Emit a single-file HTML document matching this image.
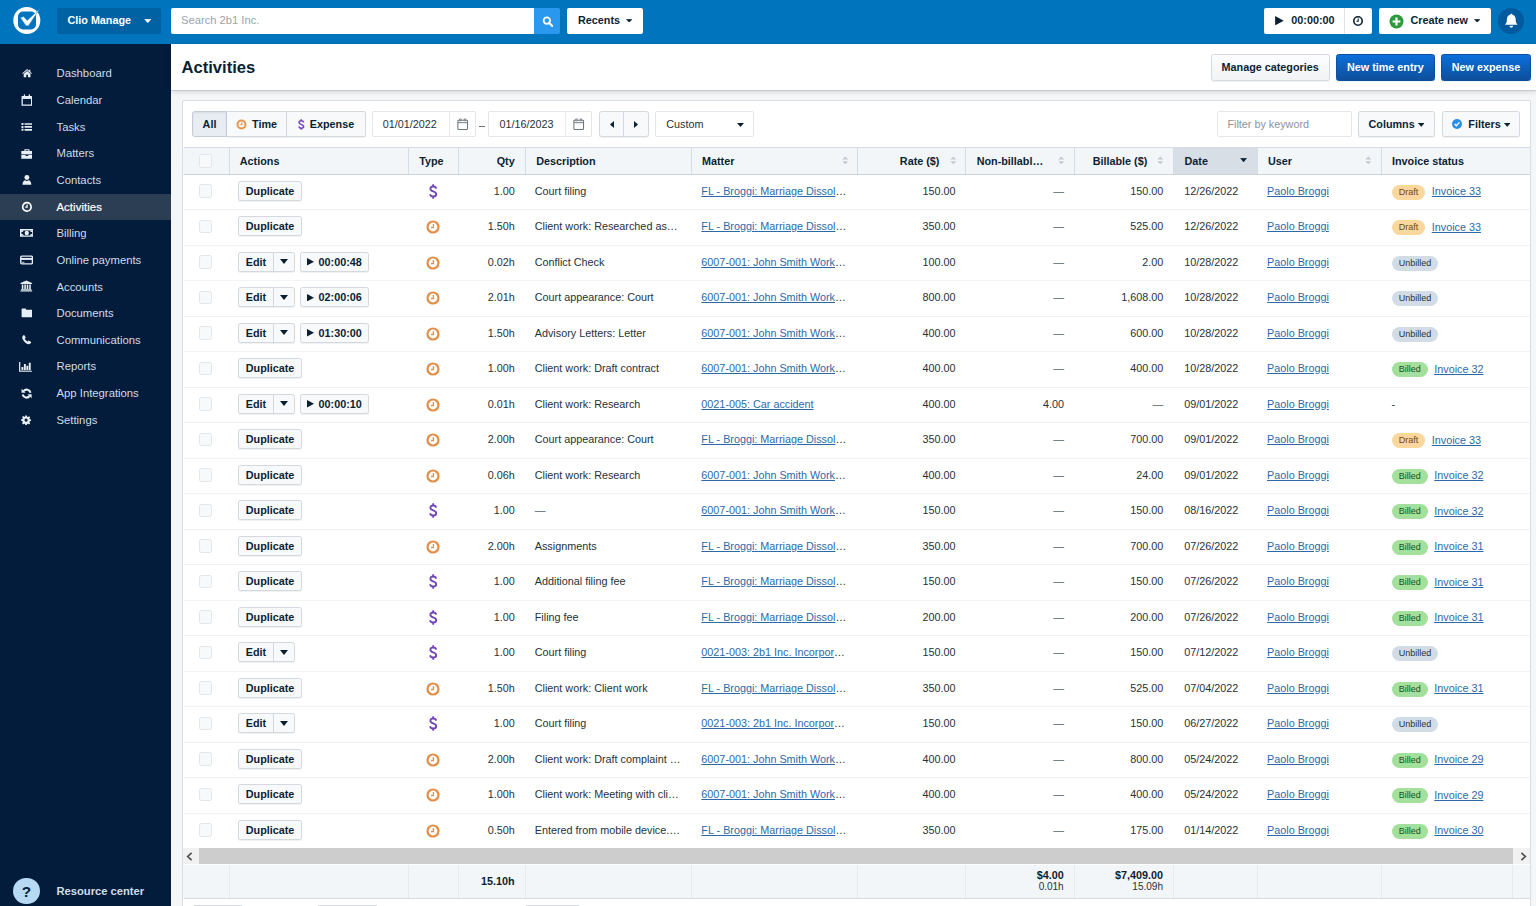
<!DOCTYPE html>
<html><head><meta charset="utf-8"><title>Activities</title>
<style>
*{box-sizing:border-box;margin:0;padding:0}
html,body{width:1536px;height:906px;overflow:hidden}
body{font-family:"Liberation Sans",sans-serif;font-size:10.8px;color:#263238;background:#f5f6f8;position:relative}
a{color:#2b69a8;text-decoration:underline;cursor:pointer}
/* header */
#hdr{position:absolute;left:0;top:0;width:1536px;height:44px;background:#0075bd}
#logo{position:absolute;left:0;top:0}
#appsw{position:absolute;left:56.7px;top:7.5px;width:104px;height:26px;background:#0061a3;border-radius:2px;color:#fff;font-weight:bold;font-size:10.8px;line-height:24.6px;padding-left:10.8px}
#appsw svg{position:absolute;right:9.500px;top:11px}
#search{position:absolute;left:171px;top:7.5px;width:363px;height:26px;background:#fff;border-radius:2px 0 0 2px;color:#9aa3ab;font-size:11.2px;line-height:24.6px;padding-left:10px}
#sbtn{position:absolute;left:534px;top:7.5px;width:26px;height:26px;background:#2b98f0;border-radius:0 2px 2px 0}
#sbtn svg{position:absolute;left:7.500px;top:8px}
.hbtn{position:absolute;top:7.5px;height:26px;background:#fff;border-radius:2px;color:#0b1f33;font-weight:bold;font-size:10.8px;line-height:25px}
#recents{left:567px;width:76px;padding-left:11px}
#recents svg{position:absolute;right:10.800px;top:11.300px}
#timer{left:1264px;width:108px}
#timer .play{position:absolute;left:11.200px;top:8.300px}
#timer .t{position:absolute;left:27.300px;top:0}
#timer .div{position:absolute;left:80px;top:0;width:1px;height:26px;background:#dfe4e8}
#timer .clk{position:absolute;left:88px;top:7px}
#create{left:1379px;width:112px}
#create .plus{position:absolute;left:10px;top:6px}
#create .t{position:absolute;left:31.400px;top:0}
#create .caret{position:absolute;right:10.800px;top:11.300px}
#bell{position:absolute;left:1498px;top:7.600px;width:26px;height:26px;border-radius:50%;background:#005a9e}
#bell svg{position:absolute;left:5.700px;top:5px}
/* sidebar */
#side{position:absolute;left:0;top:44px;width:171px;height:862px;background:#031c3b}
.nav{position:absolute;left:0;width:171px;height:26.6px;color:#d0dbe9;font-size:11.3px;line-height:26.6px;padding-left:56.5px}
.nav.on{background:#2c3e54;color:#fff;letter-spacing:0.08px;-webkit-text-stroke:0.2px #fff}
.nav svg{position:absolute;left:20.600px;top:7.400px}
#rc{position:absolute;left:13.3px;top:834px;width:26.4px;height:26.4px;border-radius:50%;background:#b6d9f4;color:#031c3b;font-weight:bold;font-size:15.4px;line-height:27px;text-align:center}
#rct{position:absolute;left:56.5px;top:834px;line-height:26.6px;color:#d3dce8;font-weight:bold;font-size:11.2px}
/* title bar */
#tbar{position:absolute;left:171px;top:44px;width:1365px;height:46.5px;background:#fff;border-bottom:1px solid #c9cccf;box-shadow:0 1px 5px rgba(0,0,0,.13)}
#tbar h1{position:absolute;left:10.5px;top:0;line-height:47.8px;font-size:16.6px;font-weight:bold;color:#0b1f33}
.btn{display:inline-block;border:1px solid #d3d9df;border-radius:2.5px;background:#f7f9fa;color:#0b1f33;font-weight:bold;font-size:10.8px;white-space:nowrap;position:relative;box-shadow:0 1px 1px rgba(0,0,0,.06)}
.tb{position:absolute;top:10px;height:26.6px;line-height:24.8px;text-align:center}
.pri{background:linear-gradient(#0a6fdc,#0e4f9c);border-color:#0b4f9e;color:#fff}
/* panel */
#panel{position:absolute;left:182px;top:100px;width:1349px;height:850px;background:#fff;border:1px solid #d9dee3;border-radius:2px}
.tl{position:absolute;top:9.8px;height:26px;line-height:24px}
.seg{border-radius:0;text-align:center}
.inp{position:absolute;top:9.8px;height:26px;border:1px solid #e3e7eb;border-radius:2px;background:#fff;line-height:24px;color:#263238;font-size:10.8px}
/* table */
#thead{box-shadow:-1px 0 0 #f3f6f9;position:absolute;left:0;top:45.5px;width:1346.5px;height:27.5px;background:#f3f6f9;border-top:1px solid #d5dce3;border-bottom:1px solid #cdd5dc;display:flex}
.th{height:25.5px;line-height:26.1px;font-weight:bold;font-size:10.8px;color:#0b1f33;border-right:1px solid #d5dce3;padding-left:10px;position:relative;white-space:nowrap}
.th.r{text-align:right;padding-right:25.7px;padding-left:0}
.th.c7{padding-right:30.4px}
.th .srt{position:absolute;right:9px;top:8.400px}
.th.r.nos{padding-right:10.5px}
.th.sorted{background:#d8dee5;padding-left:10.6px}
.th.last{border-right:0}
#tbody{position:absolute;left:0;top:73px;width:1346.5px}
.tr{display:flex;height:35.5px;border-bottom:1px solid #f1f3f5}
.td{height:34.5px;line-height:32.5px;white-space:nowrap;overflow:hidden;padding-left:8.6px;position:relative}
.td.r{text-align:right;padding-right:11.3px;padding-left:0}
.c0{width:46.3px}.c1{width:179.4px}.td.c1{padding-left:8.6px}.c2{width:49.6px}.c3{width:67.4px}.c4{width:165.8px}.c5{width:166.2px}.td.c5{padding-left:9.4px}.c6{width:108px}.c7{width:108.5px}.c8{width:99.3px}.td.c6,.td.c7,.td.c8{padding-right:10.6px}.tf.c7,.tf.c8{padding-right:10px}.c9{width:84px}.td.c9{padding-left:10.3px}.c10{width:124px}.td.c10{padding-left:9.1px}.c11{width:148px}.td.c11{padding-left:9.6px}
.cb{position:absolute;left:15.2px;top:9.5px;width:13.6px;height:13.6px;border:1px solid #e2e6ea;border-radius:2.5px;background:#f8f9fa}
.btn.sm{height:20px;line-height:18.2px;padding:0 6.4px;vertical-align:middle;margin-top:-0.9px;top:-0.5px}
.grp-l{border-radius:2.5px 0 0 2.5px}
.grp-r{border-radius:0 2.5px 2.5px 0;margin-left:-1px;padding:0 6px !important}
.tmr{margin-left:5px}
.tmr .play{margin-right:4.6px}
.caret{vertical-align:middle;position:relative;top:-1px}
.ic-clock{position:absolute;left:17.1px;top:10px}
.ic-dollar{position:absolute;left:20.1px;top:9.4px}
.badge{display:inline-block;height:15px;line-height:15px;border-radius:8px;padding:0 7.1px;font-size:9px;vertical-align:middle;margin-top:1.2px;color:#263238}
.badge.draft{background:#fad79c;color:#6b4a0e}
.badge.unbilled{background:#d2dce6}
.badge.billed{background:#a3e09b;color:#1a4f1a}
.inv{margin-left:6.5px;position:relative;top:0.5px}
.mut{color:#59646c}
#hscroll{box-shadow:-1px 0 0 #f1f1f1;position:absolute;left:0;top:746.8px;width:1346.5px;height:16.2px;background:#f1f1f1}
#hscroll .thumb{position:absolute;left:15.5px;top:0;width:1314px;height:16.2px;background:#cdcdcd}
#tfoot{box-shadow:-1px 0 0 #f3f6f9;position:absolute;left:0;top:763px;width:1346.5px;height:34.2px;background:#f3f6f9;border-bottom:1px solid #d5dce3;display:flex}
.tf{height:33px;border-right:1px solid #e6eaee;position:relative;font-size:10px;line-height:12px;text-align:right;padding-right:10.5px}
.tf b{display:block;color:#0b1f33;line-height:12.8px;font-size:10.8px}
</style></head>
<body>
<div id="hdr">
  <svg id="logo" width="44" height="44" viewBox="0 0 44 44"><circle cx="26.8" cy="20.4" r="13.5" fill="#fff"/><rect x="18" y="11.500" width="18" height="18" rx="5" fill="#0075bd"/><path d="M20.400 17.800L23.600 16.500 27.100 20.600 39.700 8.900 28.400 25.800H26z" fill="#fff" stroke="#0075bd" stroke-width="0.400"/></svg>
  <div id="appsw">Clio Manage<svg width="7.600" height="4" viewBox="0 0 8 4.500"><path d="M0.500 0.300h7L4 4.200z" fill="#fff" stroke="#fff" stroke-width="0.600" stroke-linejoin="round"/></svg></div>
  <div id="search">Search 2b1 Inc.</div>
  <div id="sbtn"><svg width="11.500" height="11" viewBox="0 0 12 12"><circle cx="5" cy="5" r="3.500" fill="none" stroke="#fff" stroke-width="2"/><path d="M7.600 7.600L11 11" stroke="#fff" stroke-width="2.200" stroke-linecap="round"/></svg></div>
  <div class="hbtn" id="recents">Recents<svg width="6.400" height="3.600" viewBox="0 0 8 4.500"><path d="M0.500 0.300h7L4 4.200z" fill="#0b1f33" stroke="#0b1f33" stroke-width="0.600" stroke-linejoin="round"/></svg></div>
  <div class="hbtn" id="timer"><svg class="play" width="8.800" height="9.400" viewBox="0 0 10 11"><path d="M0 0l10 5.5L0 11z" fill="#0b1f33"/></svg><span class="t">00:00:00</span><span class="div"></span><svg class="clk" width="12" height="12" viewBox="0 0 12 12"><circle cx="6" cy="6" r="4.200" fill="none" stroke="#0b1f33" stroke-width="1.600"/><path d="M6.200 3.600V6.300H4.400" fill="none" stroke="#0b1f33" stroke-width="1.100"/></svg></div>
  <div class="hbtn" id="create"><svg class="plus" width="15" height="15" viewBox="0 0 15 15"><circle cx="7.5" cy="7.5" r="7" fill="#2d9b3b"/><path d="M7.5 3.6v7.8M3.6 7.5h7.8" stroke="#fff" stroke-width="2.2"/></svg><span class="t">Create new</span><svg class="caret" width="6.400" height="3.600" viewBox="0 0 8 4.500"><path d="M0.500 0.300h7L4 4.200z" fill="#0b1f33" stroke="#0b1f33" stroke-width="0.600" stroke-linejoin="round"/></svg></div>
  <div id="bell"><svg width="14.600" height="15.600" viewBox="0 0 14 15"><path d="M7 0.8c.7 0 1.1.4 1.1 1 2 .5 3.100 2.200 3.100 4.300 0 2.800.6 4.100 1.900 5.200H.9C2.200 10.200 2.800 8.900 2.800 6.100c0-2.100 1.100-3.800 3.100-4.300 0-.6.400-1 1.100-1z" fill="#fff"/><path d="M5.300 12.300h3.400c0 1-.7 1.800-1.700 1.800s-1.700-.8-1.700-1.800z" fill="#fff"/></svg></div>
</div>
<div id="side">
<div class="nav" style="top:16.30px"><svg width="10.2" height="10.2" viewBox="0 0 12 12" preserveAspectRatio="none" style="left:21.6px;top:7.6px"><path d="M6 1.2L0.3 6.3l.7.8L6 2.700l5 4.400.7-.8L9.800 4.600V2H8.400v1.300z" fill="#e8eef5"/><path d="M6 3.600L2 7.100V11h3V8h2v3h3V7.100z" fill="#e8eef5"/></svg>Dashboard</div>
<div class="nav" style="top:42.95px"><svg width="11.8" height="12.4" viewBox="0 0 12 12" preserveAspectRatio="none" style="left:20.6px;top:7.0px"><path d="M1.200 2.600h9.600v8.200H1.200z" fill="none" stroke="#e8eef5" stroke-width="1.300"/><path d="M1.200 2.600h9.600v2.200H1.200z" fill="#e8eef5"/><path d="M3.500 0.800v2.400M8.500 0.800v2.400" stroke="#e8eef5" stroke-width="1.300" stroke-linecap="round"/></svg>Calendar</div>
<div class="nav" style="top:69.60px"><svg width="11.8" height="11.8" viewBox="0 0 12 12" preserveAspectRatio="none" style="left:20.6px;top:7.4px"><path d="M0.500 2h2v2h-2zM0.500 5h2v2h-2zM0.500 8h2v2h-2z" fill="#e8eef5"/><path d="M3.600 2.200h8v1.600h-8zM3.600 5.200h8v1.600h-8zM3.600 8.200h8v1.600h-8z" fill="#e8eef5"/></svg>Tasks</div>
<div class="nav" style="top:96.25px"><svg width="11.8" height="11.8" viewBox="0 0 12 12" preserveAspectRatio="none" style="left:20.6px;top:7.4px"><path d="M0.300 3h11.400v3.500H0.300z" fill="#e8eef5"/><path d="M0.300 7.200h4.400v1h2.600v-1h4.400v3.800H0.300z" fill="#e8eef5"/><path d="M4 3V1.700h4V3" fill="none" stroke="#e8eef5" stroke-width="1.100"/></svg>Matters</div>
<div class="nav" style="top:122.90px"><svg width="11.8" height="11.8" viewBox="0 0 12 12" preserveAspectRatio="none" style="left:20.6px;top:7.4px"><circle cx="6" cy="3.500" r="2.500" fill="#e8eef5"/><path d="M1.500 11c0-3 1.500-4.600 2.700-4.600.5.400 1 .7 1.800.7s1.300-.3 1.800-.7c1.200 0 2.700 1.600 2.700 4.600z" fill="#e8eef5"/></svg>Contacts</div>
<div class="nav on" style="top:149.55px"><svg width="11.8" height="11.8" viewBox="0 0 12 12" preserveAspectRatio="none" style="left:20.6px;top:7.4px"><circle cx="6" cy="6" r="4.300" fill="none" stroke="#ffffff" stroke-width="1.700"/><path d="M6.200 3.600V6.300H4.300" fill="none" stroke="#ffffff" stroke-width="1.200"/></svg>Activities</div>
<div class="nav" style="top:176.20px"><svg width="13.6" height="11.8" viewBox="0 0 12 12" preserveAspectRatio="none" style="left:19.8px;top:7.2px"><path d="M0.600 2.800h10.800v6.400H0.600z" fill="none" stroke="#e8eef5" stroke-width="1.300"/><ellipse cx="6" cy="6" rx="1.900" ry="2.300" fill="#e8eef5"/><path d="M1 3.200h2.200c0 1.200-1 2-2.200 2zM11 3.200H8.800c0 1.200 1 2 2.200 2zM1 8.800h2.200c0-1.200-1-2-2.200-2zM11 8.800H8.800c0-1.200 1-2 2.200-2z" fill="#e8eef5"/></svg>Billing</div>
<div class="nav" style="top:202.85px"><svg width="13.2" height="11.8" viewBox="0 0 12 12" preserveAspectRatio="none" style="left:20.0px;top:7.3px"><rect x="0.700" y="2.200" width="10.600" height="7.800" rx="1" fill="none" stroke="#e8eef5" stroke-width="1.300"/><path d="M0.700 4h10.600v2H0.700z" fill="#e8eef5"/><path d="M2 8h2v.9H2z" fill="#e8eef5"/></svg>Online payments</div>
<div class="nav" style="top:229.50px"><svg width="12.6" height="12.2" viewBox="0 0 12 12" preserveAspectRatio="none" style="left:20.0px;top:6.9px"><path d="M6 0.600L0.500 3v1h11V3z" fill="#e8eef5"/><path d="M1.700 4.500h1.500v4.300H1.700zM4.100 4.500h1.500v4.300H4.100zM6.400 4.500h1.500v4.300H6.400zM8.800 4.500h1.500v4.300H8.800z" fill="#e8eef5"/><path d="M1 9.200h10v.9H1zM0.400 10.400h11.200v1H0.400z" fill="#e8eef5"/></svg>Accounts</div>
<div class="nav" style="top:256.15px"><svg width="11.8" height="11.8" viewBox="0 0 12 12" preserveAspectRatio="none" style="left:20.6px;top:6.7px"><path d="M0.600 2.300c0-.5.400-.8.800-.8h3c.5 0 .8.300.8.800v.5h5.400c.5 0 .8.300.8.800v6c0 .5-.300.800-.8.800H1.400c-.4 0-.8-.3-.8-.8z" fill="#e8eef5"/></svg>Documents</div>
<div class="nav" style="top:282.80px"><svg width="11.8" height="11.8" viewBox="0 0 12 12" preserveAspectRatio="none" style="left:20.6px;top:7.4px"><path d="M2.500 1.300c.3-.3.700-.3.900 0l1.300 1.900c.2.300.1.600-.1.800l-.8.700c.5 1.200 1.700 2.400 3 3l.7-.8c.2-.2.500-.3.800-.1l1.900 1.300c.3.200.3.600 0 .9l-.9 1c-.5.500-1.200.6-1.900.4C4.700 9.500 2.300 7 1.300 4.200c-.2-.7-.1-1.400.4-1.900z" fill="#e8eef5"/></svg>Communications</div>
<div class="nav" style="top:309.45px"><svg width="13.4" height="11.2" viewBox="0 0 12 12" preserveAspectRatio="none" style="left:19.4px;top:7.4px"><path d="M0.600 1v10h11" fill="none" stroke="#e8eef5" stroke-width="1.100"/><path d="M2.200 6.500h1.700v3.400H2.200zM4.400 3.200h1.700v6.700H4.400zM6.600 5h1.700v4.900H6.600zM8.800 2h1.700v7.900H8.800z" fill="#e8eef5"/></svg>Reports</div>
<div class="nav" style="top:336.10px"><svg width="11.2" height="11.2" viewBox="0 0 12 12" preserveAspectRatio="none" style="left:21.0px;top:7.7px"><path d="M10.200 5A4.200 4.200 0 0 0 2.800 3.400" fill="none" stroke="#e8eef5" stroke-width="2.300"/><path d="M0.600 0.900v4.300h4.300z" fill="#e8eef5"/><path d="M1.800 7a4.200 4.200 0 0 0 7.400 1.600" fill="none" stroke="#e8eef5" stroke-width="2.300"/><path d="M11.400 11.100V6.800H7.100z" fill="#e8eef5"/></svg>App Integrations</div>
<div class="nav" style="top:362.75px"><svg width="10.2" height="10.2" viewBox="0 0 12 12" preserveAspectRatio="none" style="left:21.4px;top:8.2px"><path d="M5.100 0.500h1.800l.3 1.500 1 .4 1.300-.9 1.300 1.300-.9 1.300.4 1 1.500.3v1.800l-1.500.3-.4 1 .9 1.300-1.300 1.300-1.300-.9-1 .4-.3 1.500H5.100l-.3-1.500-1-.4-1.300.9-1.300-1.300.9-1.300-.4-1L.200 6.900V5.100l1.500-.3.4-1-.9-1.300 1.300-1.300 1.300.9 1-.4z" fill="#e8eef5"/><circle cx="6" cy="6" r="1.900" fill="#031c3b"/></svg>Settings</div>
  <div id="rc">?</div><div id="rct">Resource center</div>
</div>
<div id="tbar">
  <h1>Activities</h1>
  <span class="btn tb" style="left:1039.6px;width:119.100px;background:linear-gradient(#fdfdfe,#f1f3f5)">Manage categories</span>
  <span class="btn tb pri" style="left:1165.2px;width:98.400px">New time entry</span>
  <span class="btn tb pri" style="left:1270px;width:89.900px">New expense</span>
</div>
<div id="panel"><div id="pin" style="position:absolute;left:0.5px;top:0.5px;width:1346.5px;height:840px">
  <span class="btn tl seg" style="left:8.5px;width:35.0px;background:#e8edf3;border-color:#c3ccd6;border-radius:2.500px 0 0 2.500px;box-shadow:inset 0 1px 2px rgba(0,0,0,.08)">All</span>
<span class="btn tl seg" style="left:43.5px;width:60.0px;border-left:0"><svg width="11" height="11" viewBox="0 0 14 14" style="vertical-align:middle;position:relative;top:-1px;margin-right:5px"><circle cx="7" cy="7" r="5.100" fill="none" stroke="#e8944a" stroke-width="2.500"/><path d="M7.400 4.600V7.400H5.400" fill="none" stroke="#e8944a" stroke-width="1.400"/></svg>Time</span>
<span class="btn tl seg" style="left:103.5px;width:78.5px;border-left:0;border-radius:0 2.500px 2.500px 0"><svg width="6.600" height="11" viewBox="0 0 9 15" style="vertical-align:middle;position:relative;top:-0.500px;margin-right:4.800px;margin-left:1px"><path d="M4.500 0.200V2.600M4.500 12.400V14.800" stroke="#7748be" stroke-width="2.100" fill="none"/><path d="M7.700 4.600C7.400 3.100 6.200 2.400 4.500 2.400 2.700 2.400 1.500 3.300 1.500 4.700 1.500 6.200 2.700 6.800 4.500 7.400 6.500 8 7.700 8.700 7.700 10.300 7.700 11.700 6.400 12.600 4.500 12.600 2.700 12.600 1.500 11.800 1.100 10.300" stroke="#7748be" stroke-width="2.200" fill="none"/></svg>Expense</span>
<div class="inp" style="left:188.8px;width:104px;padding-left:9.5px">01/01/2022<span style="position:absolute;left:76px;top:0;width:1px;height:24px;background:#e6eaee"></span><span style="position:absolute;left:84px;top:1.900px"><svg width="11.400" height="12.400" viewBox="0 0 12 13"><rect x="0.900" y="2.300" width="10.200" height="9.800" rx="0.800" fill="none" stroke="#6f777e" stroke-width="1.100"/><path d="M0.900 4.900h10.200" stroke="#6f777e" stroke-width="1"/><path d="M2.800 1h1.700v2h-1.700zM7.500 1h1.700v2h-1.700z" fill="#fff" stroke="#6f777e" stroke-width="0.900"/></svg></span></div>
<div class="inp" style="left:304.9px;width:104px;padding-left:10.0px">01/16/2023<span style="position:absolute;left:76px;top:0;width:1px;height:24px;background:#e6eaee"></span><span style="position:absolute;left:84px;top:1.900px"><svg width="11.400" height="12.400" viewBox="0 0 12 13"><rect x="0.900" y="2.300" width="10.200" height="9.800" rx="0.800" fill="none" stroke="#6f777e" stroke-width="1.100"/><path d="M0.900 4.900h10.200" stroke="#6f777e" stroke-width="1"/><path d="M2.800 1h1.700v2h-1.700zM7.500 1h1.700v2h-1.700z" fill="#fff" stroke="#6f777e" stroke-width="0.900"/></svg></span></div>
<span style="position:absolute;left:295.7px;top:24.400px;width:6.300px;height:1.200px;background:#6a7076"></span>
<span class="btn tl" style="left:415.8px;width:24.500px;border-radius:2.500px 0 0 2.500px"><svg width="4" height="7" viewBox="0 0 4 7" style="position:absolute;left:9.500px;top:8.500px"><path d="M4 0v7L0 3.500z" fill="#0b1f33"/></svg></span>
<span class="btn tl" style="left:439.3px;width:25.800px;border-radius:0 2.500px 2.500px 0"><svg width="4" height="7" viewBox="0 0 4 7" style="position:absolute;left:10px;top:8.500px"><path d="M0 0v7l4-3.500z" fill="#0b1f33"/></svg></span>
<div class="inp" style="left:471.8px;width:99px;padding-left:10px">Custom<svg width="7" height="4" viewBox="0 0 7 4" style="position:absolute;right:9px;top:10.500px"><path d="M0 0h7L3.500 4z" fill="#0b1f33"/></svg></div>
<div class="inp" style="left:1033.5px;width:134.500px;padding-left:9.400px;color:#8a949e">Filter by keyword</div>
<span class="btn tl" style="left:1174.5px;width:76.700px;text-align:center;font-size:10.800px">Columns <svg width="6.500" height="3.800" viewBox="0 0 7 4" style="vertical-align:middle;position:relative;top:-0.500px"><path d="M0.300 0h6.400L3.500 3.800z" fill="#0b1f33" stroke="#0b1f33" stroke-width="0.600" stroke-linejoin="round"/></svg></span>
<span class="btn tl" style="left:1258.9px;width:77.700px;text-align:center;font-size:10.800px"><svg width="10" height="10" viewBox="0 0 10 10" style="vertical-align:middle;position:relative;top:-1px;margin-right:6px"><circle cx="5" cy="5" r="5" fill="#2b8de8"/><path d="M2.600 5.100l1.700 1.700 3.100-3.400" fill="none" stroke="#fff" stroke-width="1.400"/></svg>Filters <svg width="6.500" height="3.800" viewBox="0 0 7 4" style="vertical-align:middle;position:relative;top:-0.500px"><path d="M0.300 0h6.400L3.500 3.800z" fill="#0b1f33" stroke="#0b1f33" stroke-width="0.600" stroke-linejoin="round"/></svg></span>
  <div id="thead"><div class="th c0 "><span class="cb" style="top:6.300px"></span></div><div class="th c1 ">Actions</div><div class="th c2 ">Type</div><div class="th c3 r nos">Qty</div><div class="th c4 ">Description</div><div class="th c5 ">Matter<svg class="srt" width="6.600" height="8.800" viewBox="0 0 7 10" preserveAspectRatio="none"><path d="M0.300 4L3.500 0.500 6.700 4zM0.300 6L3.500 9.500 6.700 6z" fill="#c3c9cf"/></svg></div><div class="th c6 r">Rate ($)<svg class="srt" width="6.600" height="8.800" viewBox="0 0 7 10" preserveAspectRatio="none"><path d="M0.300 4L3.500 0.500 6.700 4zM0.300 6L3.500 9.500 6.700 6z" fill="#c3c9cf"/></svg></div><div class="th c7 r">Non-billabl…<svg class="srt" width="6.600" height="8.800" viewBox="0 0 7 10" preserveAspectRatio="none"><path d="M0.300 4L3.500 0.500 6.700 4zM0.300 6L3.500 9.500 6.700 6z" fill="#c3c9cf"/></svg></div><div class="th c8 r">Billable ($)<svg class="srt" width="6.600" height="8.800" viewBox="0 0 7 10" preserveAspectRatio="none"><path d="M0.300 4L3.500 0.500 6.700 4zM0.300 6L3.500 9.500 6.700 6z" fill="#c3c9cf"/></svg></div><div class="th c9 sorted">Date<svg width="7.200" height="4.200" viewBox="0 0 8 5" style="position:absolute;right:10.200px;top:10.200px"><path d="M0.400 0.300h7.200L4 4.700z" fill="#0b1f33" stroke="#0b1f33" stroke-width="0.600" stroke-linejoin="round"/></svg></div><div class="th c10 ">User<svg class="srt" width="6.600" height="8.800" viewBox="0 0 7 10" preserveAspectRatio="none"><path d="M0.300 4L3.500 0.500 6.700 4zM0.300 6L3.500 9.500 6.700 6z" fill="#c3c9cf"/></svg></div><div class="th c11 last">Invoice status</div></div>
  <div id="tbody">
<div class="tr"><div class="td c0"><span class="cb"></span></div><div class="td c1"><span class="btn sm">Duplicate</span></div><div class="td c2"><svg class="ic-dollar" width="8.400" height="15" viewBox="0 0 9 15" preserveAspectRatio="none"><path d="M4.500 0.200V2.600M4.500 12.400V14.800" stroke="#7044b6" stroke-width="1.900" fill="none"/><path d="M7.700 4.600C7.400 3.100 6.200 2.400 4.500 2.400 2.700 2.400 1.500 3.300 1.500 4.700 1.500 6.200 2.700 6.800 4.500 7.400 6.500 8 7.700 8.700 7.700 10.300 7.700 11.700 6.400 12.600 4.500 12.600 2.700 12.600 1.500 11.800 1.100 10.300" stroke="#7044b6" stroke-width="2" fill="none"/></svg></div><div class="td c3 r">1.00</div><div class="td c4">Court filing</div><div class="td c5"><a class="lnk">FL - Broggi: Marriage Dissol</a>…</div><div class="td c6 r">150.00</div><div class="td c7 r"><span class="mut">—</span></div><div class="td c8 r">150.00</div><div class="td c9">12/26/2022</div><div class="td c10"><a class="lnk">Paolo Broggi</a></div><div class="td c11"><span class="badge draft">Draft</span><a class="lnk inv">Invoice 33</a></div></div>
<div class="tr"><div class="td c0"><span class="cb"></span></div><div class="td c1"><span class="btn sm">Duplicate</span></div><div class="td c2"><svg class="ic-clock" width="14" height="14" viewBox="0 0 14 14"><circle cx="7" cy="7" r="5.5" fill="none" stroke="#e18f48" stroke-width="2.2"/><path d="M7.4 4.1V7.5H5" fill="none" stroke="#e2924d" stroke-width="1.3"/></svg></div><div class="td c3 r">1.50h</div><div class="td c4">Client work: Researched as…</div><div class="td c5"><a class="lnk">FL - Broggi: Marriage Dissol</a>…</div><div class="td c6 r">350.00</div><div class="td c7 r"><span class="mut">—</span></div><div class="td c8 r">525.00</div><div class="td c9">12/26/2022</div><div class="td c10"><a class="lnk">Paolo Broggi</a></div><div class="td c11"><span class="badge draft">Draft</span><a class="lnk inv">Invoice 33</a></div></div>
<div class="tr"><div class="td c0"><span class="cb"></span></div><div class="td c1"><span class="btn sm grp-l">Edit</span><span class="btn sm grp-r"><svg class="caret" width="8" height="5" viewBox="0 0 8 5"><path d="M0 0h8L4 5z" fill="#0b1f33"/></svg></span><span class="btn sm tmr"><svg class="play" width="7" height="7.400" viewBox="0 0 8 9" preserveAspectRatio="none"><path d="M0 0l8 4.5L0 9z" fill="#0b1f33"/></svg>00:00:48</span></div><div class="td c2"><svg class="ic-clock" width="14" height="14" viewBox="0 0 14 14"><circle cx="7" cy="7" r="5.5" fill="none" stroke="#e18f48" stroke-width="2.2"/><path d="M7.4 4.1V7.5H5" fill="none" stroke="#e2924d" stroke-width="1.3"/></svg></div><div class="td c3 r">0.02h</div><div class="td c4">Conflict Check</div><div class="td c5"><a class="lnk">6007-001: John Smith Work</a>…</div><div class="td c6 r">100.00</div><div class="td c7 r"><span class="mut">—</span></div><div class="td c8 r">2.00</div><div class="td c9">10/28/2022</div><div class="td c10"><a class="lnk">Paolo Broggi</a></div><div class="td c11"><span class="badge unbilled">Unbilled</span></div></div>
<div class="tr"><div class="td c0"><span class="cb"></span></div><div class="td c1"><span class="btn sm grp-l">Edit</span><span class="btn sm grp-r"><svg class="caret" width="8" height="5" viewBox="0 0 8 5"><path d="M0 0h8L4 5z" fill="#0b1f33"/></svg></span><span class="btn sm tmr"><svg class="play" width="7" height="7.400" viewBox="0 0 8 9" preserveAspectRatio="none"><path d="M0 0l8 4.5L0 9z" fill="#0b1f33"/></svg>02:00:06</span></div><div class="td c2"><svg class="ic-clock" width="14" height="14" viewBox="0 0 14 14"><circle cx="7" cy="7" r="5.5" fill="none" stroke="#e18f48" stroke-width="2.2"/><path d="M7.4 4.1V7.5H5" fill="none" stroke="#e2924d" stroke-width="1.3"/></svg></div><div class="td c3 r">2.01h</div><div class="td c4">Court appearance: Court</div><div class="td c5"><a class="lnk">6007-001: John Smith Work</a>…</div><div class="td c6 r">800.00</div><div class="td c7 r"><span class="mut">—</span></div><div class="td c8 r">1,608.00</div><div class="td c9">10/28/2022</div><div class="td c10"><a class="lnk">Paolo Broggi</a></div><div class="td c11"><span class="badge unbilled">Unbilled</span></div></div>
<div class="tr"><div class="td c0"><span class="cb"></span></div><div class="td c1"><span class="btn sm grp-l">Edit</span><span class="btn sm grp-r"><svg class="caret" width="8" height="5" viewBox="0 0 8 5"><path d="M0 0h8L4 5z" fill="#0b1f33"/></svg></span><span class="btn sm tmr"><svg class="play" width="7" height="7.400" viewBox="0 0 8 9" preserveAspectRatio="none"><path d="M0 0l8 4.5L0 9z" fill="#0b1f33"/></svg>01:30:00</span></div><div class="td c2"><svg class="ic-clock" width="14" height="14" viewBox="0 0 14 14"><circle cx="7" cy="7" r="5.5" fill="none" stroke="#e18f48" stroke-width="2.2"/><path d="M7.4 4.1V7.5H5" fill="none" stroke="#e2924d" stroke-width="1.3"/></svg></div><div class="td c3 r">1.50h</div><div class="td c4">Advisory Letters: Letter</div><div class="td c5"><a class="lnk">6007-001: John Smith Work</a>…</div><div class="td c6 r">400.00</div><div class="td c7 r"><span class="mut">—</span></div><div class="td c8 r">600.00</div><div class="td c9">10/28/2022</div><div class="td c10"><a class="lnk">Paolo Broggi</a></div><div class="td c11"><span class="badge unbilled">Unbilled</span></div></div>
<div class="tr"><div class="td c0"><span class="cb"></span></div><div class="td c1"><span class="btn sm">Duplicate</span></div><div class="td c2"><svg class="ic-clock" width="14" height="14" viewBox="0 0 14 14"><circle cx="7" cy="7" r="5.5" fill="none" stroke="#e18f48" stroke-width="2.2"/><path d="M7.4 4.1V7.5H5" fill="none" stroke="#e2924d" stroke-width="1.3"/></svg></div><div class="td c3 r">1.00h</div><div class="td c4">Client work: Draft contract</div><div class="td c5"><a class="lnk">6007-001: John Smith Work</a>…</div><div class="td c6 r">400.00</div><div class="td c7 r"><span class="mut">—</span></div><div class="td c8 r">400.00</div><div class="td c9">10/28/2022</div><div class="td c10"><a class="lnk">Paolo Broggi</a></div><div class="td c11"><span class="badge billed">Billed</span><a class="lnk inv">Invoice 32</a></div></div>
<div class="tr"><div class="td c0"><span class="cb"></span></div><div class="td c1"><span class="btn sm grp-l">Edit</span><span class="btn sm grp-r"><svg class="caret" width="8" height="5" viewBox="0 0 8 5"><path d="M0 0h8L4 5z" fill="#0b1f33"/></svg></span><span class="btn sm tmr"><svg class="play" width="7" height="7.400" viewBox="0 0 8 9" preserveAspectRatio="none"><path d="M0 0l8 4.5L0 9z" fill="#0b1f33"/></svg>00:00:10</span></div><div class="td c2"><svg class="ic-clock" width="14" height="14" viewBox="0 0 14 14"><circle cx="7" cy="7" r="5.5" fill="none" stroke="#e18f48" stroke-width="2.2"/><path d="M7.4 4.1V7.5H5" fill="none" stroke="#e2924d" stroke-width="1.3"/></svg></div><div class="td c3 r">0.01h</div><div class="td c4">Client work: Research</div><div class="td c5"><a class="lnk">0021-005: Car accident</a></div><div class="td c6 r">400.00</div><div class="td c7 r">4.00</div><div class="td c8 r"><span class="mut">—</span></div><div class="td c9">09/01/2022</div><div class="td c10"><a class="lnk">Paolo Broggi</a></div><div class="td c11"><span class="dash">-</span></div></div>
<div class="tr"><div class="td c0"><span class="cb"></span></div><div class="td c1"><span class="btn sm">Duplicate</span></div><div class="td c2"><svg class="ic-clock" width="14" height="14" viewBox="0 0 14 14"><circle cx="7" cy="7" r="5.5" fill="none" stroke="#e18f48" stroke-width="2.2"/><path d="M7.4 4.1V7.5H5" fill="none" stroke="#e2924d" stroke-width="1.3"/></svg></div><div class="td c3 r">2.00h</div><div class="td c4">Court appearance: Court</div><div class="td c5"><a class="lnk">FL - Broggi: Marriage Dissol</a>…</div><div class="td c6 r">350.00</div><div class="td c7 r"><span class="mut">—</span></div><div class="td c8 r">700.00</div><div class="td c9">09/01/2022</div><div class="td c10"><a class="lnk">Paolo Broggi</a></div><div class="td c11"><span class="badge draft">Draft</span><a class="lnk inv">Invoice 33</a></div></div>
<div class="tr"><div class="td c0"><span class="cb"></span></div><div class="td c1"><span class="btn sm">Duplicate</span></div><div class="td c2"><svg class="ic-clock" width="14" height="14" viewBox="0 0 14 14"><circle cx="7" cy="7" r="5.5" fill="none" stroke="#e18f48" stroke-width="2.2"/><path d="M7.4 4.1V7.5H5" fill="none" stroke="#e2924d" stroke-width="1.3"/></svg></div><div class="td c3 r">0.06h</div><div class="td c4">Client work: Research</div><div class="td c5"><a class="lnk">6007-001: John Smith Work</a>…</div><div class="td c6 r">400.00</div><div class="td c7 r"><span class="mut">—</span></div><div class="td c8 r">24.00</div><div class="td c9">09/01/2022</div><div class="td c10"><a class="lnk">Paolo Broggi</a></div><div class="td c11"><span class="badge billed">Billed</span><a class="lnk inv">Invoice 32</a></div></div>
<div class="tr"><div class="td c0"><span class="cb"></span></div><div class="td c1"><span class="btn sm">Duplicate</span></div><div class="td c2"><svg class="ic-dollar" width="8.400" height="15" viewBox="0 0 9 15" preserveAspectRatio="none"><path d="M4.500 0.200V2.600M4.500 12.400V14.800" stroke="#7044b6" stroke-width="1.900" fill="none"/><path d="M7.700 4.600C7.400 3.100 6.200 2.400 4.500 2.400 2.700 2.400 1.500 3.300 1.500 4.700 1.500 6.200 2.700 6.800 4.500 7.400 6.500 8 7.700 8.700 7.700 10.300 7.700 11.700 6.400 12.600 4.500 12.600 2.700 12.600 1.500 11.800 1.100 10.300" stroke="#7044b6" stroke-width="2" fill="none"/></svg></div><div class="td c3 r">1.00</div><div class="td c4"><span class="mut">—</span></div><div class="td c5"><a class="lnk">6007-001: John Smith Work</a>…</div><div class="td c6 r">150.00</div><div class="td c7 r"><span class="mut">—</span></div><div class="td c8 r">150.00</div><div class="td c9">08/16/2022</div><div class="td c10"><a class="lnk">Paolo Broggi</a></div><div class="td c11"><span class="badge billed">Billed</span><a class="lnk inv">Invoice 32</a></div></div>
<div class="tr"><div class="td c0"><span class="cb"></span></div><div class="td c1"><span class="btn sm">Duplicate</span></div><div class="td c2"><svg class="ic-clock" width="14" height="14" viewBox="0 0 14 14"><circle cx="7" cy="7" r="5.5" fill="none" stroke="#e18f48" stroke-width="2.2"/><path d="M7.4 4.1V7.5H5" fill="none" stroke="#e2924d" stroke-width="1.3"/></svg></div><div class="td c3 r">2.00h</div><div class="td c4">Assignments</div><div class="td c5"><a class="lnk">FL - Broggi: Marriage Dissol</a>…</div><div class="td c6 r">350.00</div><div class="td c7 r"><span class="mut">—</span></div><div class="td c8 r">700.00</div><div class="td c9">07/26/2022</div><div class="td c10"><a class="lnk">Paolo Broggi</a></div><div class="td c11"><span class="badge billed">Billed</span><a class="lnk inv">Invoice 31</a></div></div>
<div class="tr"><div class="td c0"><span class="cb"></span></div><div class="td c1"><span class="btn sm">Duplicate</span></div><div class="td c2"><svg class="ic-dollar" width="8.400" height="15" viewBox="0 0 9 15" preserveAspectRatio="none"><path d="M4.500 0.200V2.600M4.500 12.400V14.800" stroke="#7044b6" stroke-width="1.900" fill="none"/><path d="M7.700 4.600C7.400 3.100 6.200 2.400 4.500 2.400 2.700 2.400 1.500 3.300 1.500 4.700 1.500 6.200 2.700 6.800 4.500 7.400 6.500 8 7.700 8.700 7.700 10.300 7.700 11.700 6.400 12.600 4.500 12.600 2.700 12.600 1.500 11.800 1.100 10.300" stroke="#7044b6" stroke-width="2" fill="none"/></svg></div><div class="td c3 r">1.00</div><div class="td c4">Additional filing fee</div><div class="td c5"><a class="lnk">FL - Broggi: Marriage Dissol</a>…</div><div class="td c6 r">150.00</div><div class="td c7 r"><span class="mut">—</span></div><div class="td c8 r">150.00</div><div class="td c9">07/26/2022</div><div class="td c10"><a class="lnk">Paolo Broggi</a></div><div class="td c11"><span class="badge billed">Billed</span><a class="lnk inv">Invoice 31</a></div></div>
<div class="tr"><div class="td c0"><span class="cb"></span></div><div class="td c1"><span class="btn sm">Duplicate</span></div><div class="td c2"><svg class="ic-dollar" width="8.400" height="15" viewBox="0 0 9 15" preserveAspectRatio="none"><path d="M4.500 0.200V2.600M4.500 12.400V14.800" stroke="#7044b6" stroke-width="1.900" fill="none"/><path d="M7.700 4.600C7.400 3.100 6.200 2.400 4.500 2.400 2.700 2.400 1.500 3.300 1.500 4.700 1.500 6.200 2.700 6.800 4.500 7.400 6.500 8 7.700 8.700 7.700 10.300 7.700 11.700 6.400 12.600 4.500 12.600 2.700 12.600 1.500 11.800 1.100 10.300" stroke="#7044b6" stroke-width="2" fill="none"/></svg></div><div class="td c3 r">1.00</div><div class="td c4">Filing fee</div><div class="td c5"><a class="lnk">FL - Broggi: Marriage Dissol</a>…</div><div class="td c6 r">200.00</div><div class="td c7 r"><span class="mut">—</span></div><div class="td c8 r">200.00</div><div class="td c9">07/26/2022</div><div class="td c10"><a class="lnk">Paolo Broggi</a></div><div class="td c11"><span class="badge billed">Billed</span><a class="lnk inv">Invoice 31</a></div></div>
<div class="tr"><div class="td c0"><span class="cb"></span></div><div class="td c1"><span class="btn sm grp-l">Edit</span><span class="btn sm grp-r"><svg class="caret" width="8" height="5" viewBox="0 0 8 5"><path d="M0 0h8L4 5z" fill="#0b1f33"/></svg></span></div><div class="td c2"><svg class="ic-dollar" width="8.400" height="15" viewBox="0 0 9 15" preserveAspectRatio="none"><path d="M4.500 0.200V2.600M4.500 12.400V14.800" stroke="#7044b6" stroke-width="1.900" fill="none"/><path d="M7.700 4.600C7.400 3.100 6.200 2.400 4.500 2.400 2.700 2.400 1.500 3.300 1.500 4.700 1.500 6.200 2.700 6.800 4.500 7.400 6.500 8 7.700 8.700 7.700 10.300 7.700 11.700 6.400 12.600 4.500 12.600 2.700 12.600 1.500 11.800 1.100 10.300" stroke="#7044b6" stroke-width="2" fill="none"/></svg></div><div class="td c3 r">1.00</div><div class="td c4">Court filing</div><div class="td c5"><a class="lnk">0021-003: 2b1 Inc. Incorpor</a>…</div><div class="td c6 r">150.00</div><div class="td c7 r"><span class="mut">—</span></div><div class="td c8 r">150.00</div><div class="td c9">07/12/2022</div><div class="td c10"><a class="lnk">Paolo Broggi</a></div><div class="td c11"><span class="badge unbilled">Unbilled</span></div></div>
<div class="tr"><div class="td c0"><span class="cb"></span></div><div class="td c1"><span class="btn sm">Duplicate</span></div><div class="td c2"><svg class="ic-clock" width="14" height="14" viewBox="0 0 14 14"><circle cx="7" cy="7" r="5.5" fill="none" stroke="#e18f48" stroke-width="2.2"/><path d="M7.4 4.1V7.5H5" fill="none" stroke="#e2924d" stroke-width="1.3"/></svg></div><div class="td c3 r">1.50h</div><div class="td c4">Client work: Client work</div><div class="td c5"><a class="lnk">FL - Broggi: Marriage Dissol</a>…</div><div class="td c6 r">350.00</div><div class="td c7 r"><span class="mut">—</span></div><div class="td c8 r">525.00</div><div class="td c9">07/04/2022</div><div class="td c10"><a class="lnk">Paolo Broggi</a></div><div class="td c11"><span class="badge billed">Billed</span><a class="lnk inv">Invoice 31</a></div></div>
<div class="tr"><div class="td c0"><span class="cb"></span></div><div class="td c1"><span class="btn sm grp-l">Edit</span><span class="btn sm grp-r"><svg class="caret" width="8" height="5" viewBox="0 0 8 5"><path d="M0 0h8L4 5z" fill="#0b1f33"/></svg></span></div><div class="td c2"><svg class="ic-dollar" width="8.400" height="15" viewBox="0 0 9 15" preserveAspectRatio="none"><path d="M4.500 0.200V2.600M4.500 12.400V14.800" stroke="#7044b6" stroke-width="1.900" fill="none"/><path d="M7.700 4.600C7.400 3.100 6.200 2.400 4.500 2.400 2.700 2.400 1.500 3.300 1.500 4.700 1.500 6.200 2.700 6.800 4.500 7.400 6.500 8 7.700 8.700 7.700 10.300 7.700 11.700 6.400 12.600 4.500 12.600 2.700 12.600 1.500 11.800 1.100 10.300" stroke="#7044b6" stroke-width="2" fill="none"/></svg></div><div class="td c3 r">1.00</div><div class="td c4">Court filing</div><div class="td c5"><a class="lnk">0021-003: 2b1 Inc. Incorpor</a>…</div><div class="td c6 r">150.00</div><div class="td c7 r"><span class="mut">—</span></div><div class="td c8 r">150.00</div><div class="td c9">06/27/2022</div><div class="td c10"><a class="lnk">Paolo Broggi</a></div><div class="td c11"><span class="badge unbilled">Unbilled</span></div></div>
<div class="tr"><div class="td c0"><span class="cb"></span></div><div class="td c1"><span class="btn sm">Duplicate</span></div><div class="td c2"><svg class="ic-clock" width="14" height="14" viewBox="0 0 14 14"><circle cx="7" cy="7" r="5.5" fill="none" stroke="#e18f48" stroke-width="2.2"/><path d="M7.4 4.1V7.5H5" fill="none" stroke="#e2924d" stroke-width="1.3"/></svg></div><div class="td c3 r">2.00h</div><div class="td c4">Client work: Draft complaint …</div><div class="td c5"><a class="lnk">6007-001: John Smith Work</a>…</div><div class="td c6 r">400.00</div><div class="td c7 r"><span class="mut">—</span></div><div class="td c8 r">800.00</div><div class="td c9">05/24/2022</div><div class="td c10"><a class="lnk">Paolo Broggi</a></div><div class="td c11"><span class="badge billed">Billed</span><a class="lnk inv">Invoice 29</a></div></div>
<div class="tr"><div class="td c0"><span class="cb"></span></div><div class="td c1"><span class="btn sm">Duplicate</span></div><div class="td c2"><svg class="ic-clock" width="14" height="14" viewBox="0 0 14 14"><circle cx="7" cy="7" r="5.5" fill="none" stroke="#e18f48" stroke-width="2.2"/><path d="M7.4 4.1V7.5H5" fill="none" stroke="#e2924d" stroke-width="1.3"/></svg></div><div class="td c3 r">1.00h</div><div class="td c4">Client work: Meeting with cli…</div><div class="td c5"><a class="lnk">6007-001: John Smith Work</a>…</div><div class="td c6 r">400.00</div><div class="td c7 r"><span class="mut">—</span></div><div class="td c8 r">400.00</div><div class="td c9">05/24/2022</div><div class="td c10"><a class="lnk">Paolo Broggi</a></div><div class="td c11"><span class="badge billed">Billed</span><a class="lnk inv">Invoice 29</a></div></div>
<div class="tr"><div class="td c0"><span class="cb"></span></div><div class="td c1"><span class="btn sm">Duplicate</span></div><div class="td c2"><svg class="ic-clock" width="14" height="14" viewBox="0 0 14 14"><circle cx="7" cy="7" r="5.5" fill="none" stroke="#e18f48" stroke-width="2.2"/><path d="M7.4 4.1V7.5H5" fill="none" stroke="#e2924d" stroke-width="1.3"/></svg></div><div class="td c3 r">0.50h</div><div class="td c4">Entered from mobile device.…</div><div class="td c5"><a class="lnk">FL - Broggi: Marriage Dissol</a>…</div><div class="td c6 r">350.00</div><div class="td c7 r"><span class="mut">—</span></div><div class="td c8 r">175.00</div><div class="td c9">01/14/2022</div><div class="td c10"><a class="lnk">Paolo Broggi</a></div><div class="td c11"><span class="badge billed">Billed</span><a class="lnk inv">Invoice 30</a></div></div>
  </div>
  <div id="hscroll"><div class="thumb"></div><svg width="7" height="9" viewBox="0 0 7 9" style="position:absolute;left:2.500px;top:3.700px"><path d="M5.600 0.800L1.700 4.500 5.600 8.200" fill="none" stroke="#505050" stroke-width="1.700"/></svg><svg width="7" height="9" viewBox="0 0 7 9" style="position:absolute;left:1336.500px;top:3.500px"><path d="M1.400 0.800L5.300 4.500 1.400 8.200" fill="none" stroke="#505050" stroke-width="1.700"/></svg></div>
  <div id="tfoot"><div class="tf c0"></div><div class="tf c1"></div><div class="tf c2"></div><div class="tf c3"><b style="line-height:33px">15.10h</b></div><div class="tf c4"></div><div class="tf c5"></div><div class="tf c6"></div><div class="tf c7"><b style="margin-top:4.100px">$4.00</b>0.01h</div><div class="tf c8"><b style="margin-top:4.100px">$7,409.00</b>15.09h</div><div class="tf c9"></div><div class="tf c10"></div><div class="tf c11" style="width:131.500px"></div></div>
</div></div>
<div style="position:absolute;left:192.8px;top:905px;width:50.4px;height:4px;border:1px solid #d3d9df;border-radius:2.500px;background:#f7f9fa"></div><div style="position:absolute;left:317.4px;top:905px;width:60.4px;height:4px;border:1px solid #d3d9df;border-radius:2.500px;background:#f7f9fa"></div><div style="position:absolute;left:525.2px;top:905px;width:54.6px;height:4px;border:1px solid #d3d9df;border-radius:2.500px;background:#f7f9fa"></div>
</body></html>
